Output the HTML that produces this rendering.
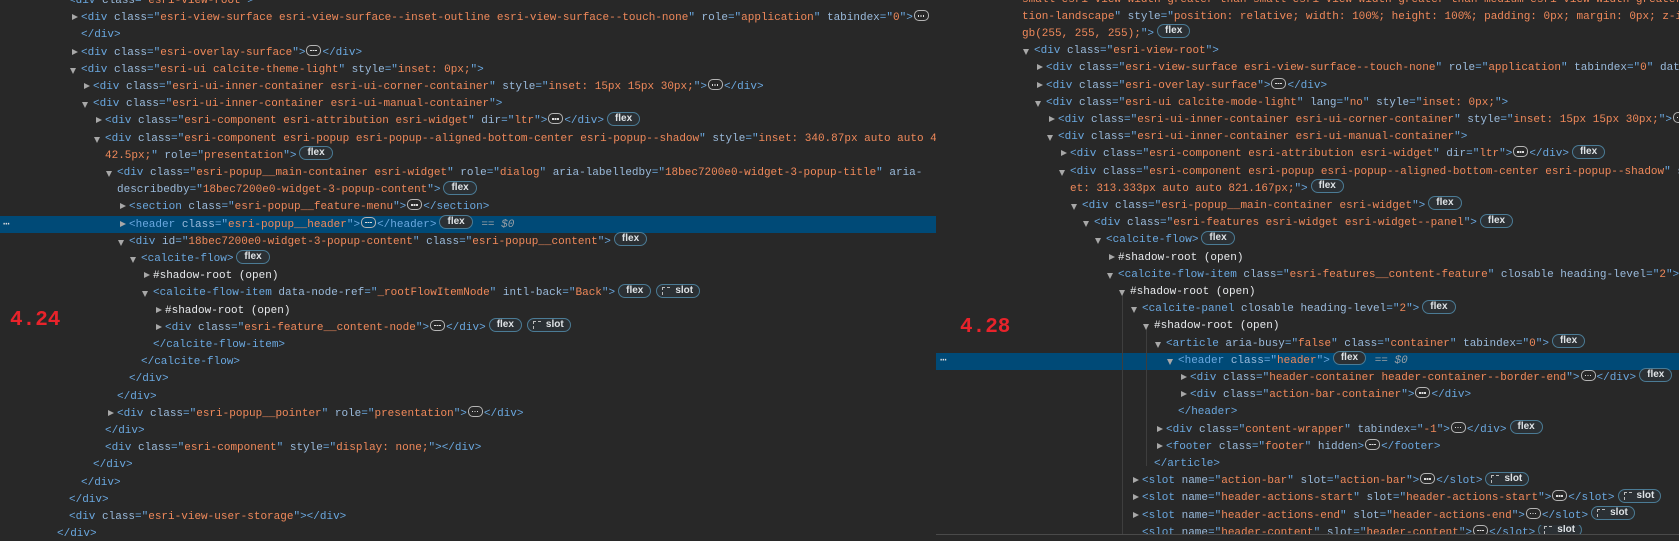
<!DOCTYPE html>
<html><head><meta charset="utf-8">
<style>
html,body{margin:0;padding:0;background:#282828;width:1679px;height:541px;overflow:hidden;position:relative;}
.pane{position:absolute;top:0;height:541px;overflow:hidden;}
#L{left:0;width:936px;}
#R{left:936px;width:743px;}
.l{position:absolute;margin-top:3px;white-space:pre;font-family:"Liberation Mono",monospace;font-size:11px;line-height:17.2px;height:17.2px;color:#e8eaed;}
.t{color:#6aa8e0}
.n{color:#9bbbdc}
.v{color:#f0895a}
.hl{position:absolute;left:0;right:0;height:17px;background:#004a77;margin-top:3px;}
.c,.e{position:absolute;width:0;height:0;}
.c{left:-9px;top:4px;border-left:6px solid #a8a8a8;border-top:3.5px solid transparent;border-bottom:3.5px solid transparent;}
.e{left:-11px;top:6px;border-top:6px solid #a8a8a8;border-left:3.5px solid transparent;border-right:3.5px solid transparent;}
.b{display:inline-block;vertical-align:middle;margin:-3px 2px 0 3px;height:12px;line-height:12px;padding:0 7px;border:1px solid #4b7b95;border-radius:8px;background:#2b3034;font-family:"Liberation Sans",sans-serif;font-size:10px;font-weight:bold;color:#dfe3e6;}
.s{padding:0 6px 0 18px;position:relative}
.s:before{content:"";position:absolute;left:5px;top:2px;width:7px;height:7px;border:1px dashed #bbb;border-right:none;border-bottom:none;}
.d{display:inline-block;vertical-align:middle;margin:-3px 1px 0 1px;width:13px;height:9px;border:1px solid #b5b5b5;border-radius:5px;position:relative;}
.d:after{content:"";position:absolute;left:3px;top:4px;width:1.5px;height:1.5px;background:#ddd;box-shadow:2.5px 0 0 #ddd,5px 0 0 #ddd;}
.eq{color:#9aa0a6;font-style:italic}
.red{position:absolute;font-family:"Liberation Mono",monospace;font-weight:bold;font-size:21px;color:#e8232b;}
.g{position:absolute;width:1px;background:#3e3e3e;}
</style></head><body>
<div class="pane" id="L">
<div class="hl" style="top:212.5px"></div>
<div class="l" style="top:213.6px;left:3px;color:#ddd">⋯</div>
<div class="red" style="left:10px;top:309px">4.24</div>

<div class="l" style="top:-10px;left:69px"><span class="t">&lt;div </span><span class="n">class</span><span class="t">="</span><span class="v">esri-view-root</span><span class="t">"&gt;</span></div>
<div class="l" style="top:7.2px;left:81px"><i class="c"></i><span class="t">&lt;div </span><span class="n">class</span><span class="t">="</span><span class="v">esri-view-surface esri-view-surface--inset-outline esri-view-surface--touch-none</span><span class="t">" </span><span class="n">role</span><span class="t">="</span><span class="v">application</span><span class="t">" </span><span class="n">tabindex</span><span class="t">="</span><span class="v">0</span><span class="t">"&gt;</span><span class="d"></span></div>
<div class="l" style="top:24.4px;left:81px"><span class="t">&lt;/div&gt;</span></div>
<div class="l" style="top:41.6px;left:81px"><i class="c"></i><span class="t">&lt;div </span><span class="n">class</span><span class="t">="</span><span class="v">esri-overlay-surface</span><span class="t">"&gt;</span><span class="d"></span><span class="t">&lt;/div&gt;</span></div>
<div class="l" style="top:58.8px;left:81px"><i class="e"></i><span class="t">&lt;div </span><span class="n">class</span><span class="t">="</span><span class="v">esri-ui calcite-theme-light</span><span class="t">" </span><span class="n">style</span><span class="t">="</span><span class="v">inset: 0px;</span><span class="t">"&gt;</span></div>
<div class="l" style="top:76px;left:93px"><i class="c"></i><span class="t">&lt;div </span><span class="n">class</span><span class="t">="</span><span class="v">esri-ui-inner-container esri-ui-corner-container</span><span class="t">" </span><span class="n">style</span><span class="t">="</span><span class="v">inset: 15px 15px 30px;</span><span class="t">"&gt;</span><span class="d"></span><span class="t">&lt;/div&gt;</span></div>
<div class="l" style="top:93.2px;left:93px"><i class="e"></i><span class="t">&lt;div </span><span class="n">class</span><span class="t">="</span><span class="v">esri-ui-inner-container esri-ui-manual-container</span><span class="t">"&gt;</span></div>
<div class="l" style="top:110.4px;left:105px"><i class="c"></i><span class="t">&lt;div </span><span class="n">class</span><span class="t">="</span><span class="v">esri-component esri-attribution esri-widget</span><span class="t">" </span><span class="n">dir</span><span class="t">="</span><span class="v">ltr</span><span class="t">"&gt;</span><span class="d"></span><span class="t">&lt;/div&gt;</span><span class="b">flex</span></div>
<div class="l" style="top:127.6px;left:105px"><i class="e"></i><span class="t">&lt;div </span><span class="n">class</span><span class="t">="</span><span class="v">esri-component esri-popup esri-popup--aligned-bottom-center esri-popup--shadow</span><span class="t">" </span><span class="n">style</span><span class="t">="</span><span class="v">inset: 340.87px auto auto 4</span></div>
<div class="l" style="top:144.8px;left:105px"><span class="v">42.5px;</span><span class="t">" </span><span class="n">role</span><span class="t">="</span><span class="v">presentation</span><span class="t">"&gt;</span><span class="b">flex</span></div>
<div class="l" style="top:162px;left:117px"><i class="e"></i><span class="t">&lt;div </span><span class="n">class</span><span class="t">="</span><span class="v">esri-popup__main-container esri-widget</span><span class="t">" </span><span class="n">role</span><span class="t">="</span><span class="v">dialog</span><span class="t">" </span><span class="n">aria-labelledby</span><span class="t">="</span><span class="v">18bec7200e0-widget-3-popup-title</span><span class="t">" </span><span class="n">aria-</span></div>
<div class="l" style="top:179.2px;left:117px"><span class="n">describedby</span><span class="t">="</span><span class="v">18bec7200e0-widget-3-popup-content</span><span class="t">"&gt;</span><span class="b">flex</span></div>
<div class="l" style="top:196.4px;left:129px"><i class="c"></i><span class="t">&lt;section </span><span class="n">class</span><span class="t">="</span><span class="v">esri-popup__feature-menu</span><span class="t">"&gt;</span><span class="d"></span><span class="t">&lt;/section&gt;</span></div>
<div class="l" style="top:213.6px;left:129px"><i class="c"></i><span class="t">&lt;header </span><span class="n">class</span><span class="t">="</span><span class="v">esri-popup__header</span><span class="t">"&gt;</span><span class="d"></span><span class="t">&lt;/header&gt;</span><span class="b">flex</span> <span class="eq">== $0</span></div>
<div class="l" style="top:230.8px;left:129px"><i class="e"></i><span class="t">&lt;div </span><span class="n">id</span><span class="t">="</span><span class="v">18bec7200e0-widget-3-popup-content</span><span class="t">" </span><span class="n">class</span><span class="t">="</span><span class="v">esri-popup__content</span><span class="t">"&gt;</span><span class="b">flex</span></div>
<div class="l" style="top:248px;left:141px"><i class="e"></i><span class="t">&lt;calcite-flow&gt;</span><span class="b">flex</span></div>
<div class="l" style="top:265.2px;left:153px"><i class="c"></i>#shadow-root (open)</div>
<div class="l" style="top:282.4px;left:153px"><i class="e"></i><span class="t">&lt;calcite-flow-item </span><span class="n">data-node-ref</span><span class="t">="</span><span class="v">_rootFlowItemNode</span><span class="t">" </span><span class="n">intl-back</span><span class="t">="</span><span class="v">Back</span><span class="t">"&gt;</span><span class="b">flex</span><span class="b s">slot</span></div>
<div class="l" style="top:299.6px;left:165px"><i class="c"></i>#shadow-root (open)</div>
<div class="l" style="top:316.8px;left:165px"><i class="c"></i><span class="t">&lt;div </span><span class="n">class</span><span class="t">="</span><span class="v">esri-feature__content-node</span><span class="t">"&gt;</span><span class="d"></span><span class="t">&lt;/div&gt;</span><span class="b">flex</span><span class="b s">slot</span></div>
<div class="l" style="top:334px;left:153px"><span class="t">&lt;/calcite-flow-item&gt;</span></div>
<div class="l" style="top:351.2px;left:141px"><span class="t">&lt;/calcite-flow&gt;</span></div>
<div class="l" style="top:368.4px;left:129px"><span class="t">&lt;/div&gt;</span></div>
<div class="l" style="top:385.6px;left:117px"><span class="t">&lt;/div&gt;</span></div>
<div class="l" style="top:402.8px;left:117px"><i class="c"></i><span class="t">&lt;div </span><span class="n">class</span><span class="t">="</span><span class="v">esri-popup__pointer</span><span class="t">" </span><span class="n">role</span><span class="t">="</span><span class="v">presentation</span><span class="t">"&gt;</span><span class="d"></span><span class="t">&lt;/div&gt;</span></div>
<div class="l" style="top:420px;left:105px"><span class="t">&lt;/div&gt;</span></div>
<div class="l" style="top:437.2px;left:105px"><span class="t">&lt;div </span><span class="n">class</span><span class="t">="</span><span class="v">esri-component</span><span class="t">" </span><span class="n">style</span><span class="t">="</span><span class="v">display: none;</span><span class="t">"&gt;&lt;/div&gt;</span></div>
<div class="l" style="top:454.4px;left:93px"><span class="t">&lt;/div&gt;</span></div>
<div class="l" style="top:471.6px;left:81px"><span class="t">&lt;/div&gt;</span></div>
<div class="l" style="top:488.8px;left:69px"><span class="t">&lt;/div&gt;</span></div>
<div class="l" style="top:506px;left:69px"><span class="t">&lt;div </span><span class="n">class</span><span class="t">="</span><span class="v">esri-view-user-storage</span><span class="t">"&gt;&lt;/div&gt;</span></div>
<div class="l" style="top:523.2px;left:57px"><span class="t">&lt;/div&gt;</span></div>
</div>

<div class="pane" id="R">
<div class="hl" style="top:349.5px"></div>
<div class="l" style="top:350px;left:4px;color:#ddd">⋯</div>
<div class="red" style="left:24px;top:316px">4.28</div>
<div class="g" style="left:186px;top:293px;height:241px"></div>
<div class="g" style="left:210px;top:328px;height:138px"></div>
<div style="position:absolute;left:0;right:0;top:534px;height:1px;background:#4a4a4a"></div>

<div class="l" style="top:-11.5px;left:86px"><span class="v">small esri-view-width-greater-than-small esri-view-width-greater-than-medium esri-view-width-greater</span></div>
<div class="l" style="top:5.7px;left:86px"><span class="v">tion-landscape</span><span class="t">" </span><span class="n">style</span><span class="t">="</span><span class="v">position: relative; width: 100%; height: 100%; padding: 0px; margin: 0px; z-i</span></div>
<div class="l" style="top:22.9px;left:86px"><span class="v">gb(255, 255, 255);</span><span class="t">"&gt;</span><span class="b">flex</span></div>
<div class="l" style="top:40.1px;left:98px"><i class="e"></i><span class="t">&lt;div </span><span class="n">class</span><span class="t">="</span><span class="v">esri-view-root</span><span class="t">"&gt;</span></div>
<div class="l" style="top:57.3px;left:110px"><i class="c"></i><span class="t">&lt;div </span><span class="n">class</span><span class="t">="</span><span class="v">esri-view-surface esri-view-surface--touch-none</span><span class="t">" </span><span class="n">role</span><span class="t">="</span><span class="v">application</span><span class="t">" </span><span class="n">tabindex</span><span class="t">="</span><span class="v">0</span><span class="t">" </span><span class="n">data-interacting</span></div>
<div class="l" style="top:74.5px;left:110px"><i class="c"></i><span class="t">&lt;div </span><span class="n">class</span><span class="t">="</span><span class="v">esri-overlay-surface</span><span class="t">"&gt;</span><span class="d"></span><span class="t">&lt;/div&gt;</span></div>
<div class="l" style="top:91.7px;left:110px"><i class="e"></i><span class="t">&lt;div </span><span class="n">class</span><span class="t">="</span><span class="v">esri-ui calcite-mode-light</span><span class="t">" </span><span class="n">lang</span><span class="t">="</span><span class="v">no</span><span class="t">" </span><span class="n">style</span><span class="t">="</span><span class="v">inset: 0px;</span><span class="t">"&gt;</span></div>
<div class="l" style="top:108.9px;left:122px"><i class="c"></i><span class="t">&lt;div </span><span class="n">class</span><span class="t">="</span><span class="v">esri-ui-inner-container esri-ui-corner-container</span><span class="t">" </span><span class="n">style</span><span class="t">="</span><span class="v">inset: 15px 15px 30px;</span><span class="t">"&gt;</span><span class="d"></span><span class="t">&lt;/div&gt;</span></div>
<div class="l" style="top:126.1px;left:122px"><i class="e"></i><span class="t">&lt;div </span><span class="n">class</span><span class="t">="</span><span class="v">esri-ui-inner-container esri-ui-manual-container</span><span class="t">"&gt;</span></div>
<div class="l" style="top:143.3px;left:134px"><i class="c"></i><span class="t">&lt;div </span><span class="n">class</span><span class="t">="</span><span class="v">esri-component esri-attribution esri-widget</span><span class="t">" </span><span class="n">dir</span><span class="t">="</span><span class="v">ltr</span><span class="t">"&gt;</span><span class="d"></span><span class="t">&lt;/div&gt;</span><span class="b">flex</span></div>
<div class="l" style="top:160.5px;left:134px"><i class="e"></i><span class="t">&lt;div </span><span class="n">class</span><span class="t">="</span><span class="v">esri-component esri-popup esri-popup--aligned-bottom-center esri-popup--shadow</span><span class="t">" </span><span class="n">style</span><span class="t">="</span><span class="v">ins</span></div>
<div class="l" style="top:177.7px;left:134px"><span class="v">et: 313.333px auto auto 821.167px;</span><span class="t">"&gt;</span><span class="b">flex</span></div>
<div class="l" style="top:194.9px;left:146px"><i class="e"></i><span class="t">&lt;div </span><span class="n">class</span><span class="t">="</span><span class="v">esri-popup__main-container esri-widget</span><span class="t">"&gt;</span><span class="b">flex</span></div>
<div class="l" style="top:212.1px;left:158px"><i class="e"></i><span class="t">&lt;div </span><span class="n">class</span><span class="t">="</span><span class="v">esri-features esri-widget esri-widget--panel</span><span class="t">"&gt;</span><span class="b">flex</span></div>
<div class="l" style="top:229.3px;left:170px"><i class="e"></i><span class="t">&lt;calcite-flow&gt;</span><span class="b">flex</span></div>
<div class="l" style="top:246.5px;left:182px"><i class="c"></i>#shadow-root (open)</div>
<div class="l" style="top:263.7px;left:182px"><i class="e"></i><span class="t">&lt;calcite-flow-item </span><span class="n">class</span><span class="t">="</span><span class="v">esri-features__content-feature</span><span class="t">" </span><span class="n">closable heading-level</span><span class="t">="</span><span class="v">2</span><span class="t">"&gt;</span><span class="b">flex</span></div>
<div class="l" style="top:280.9px;left:194px"><i class="e"></i>#shadow-root (open)</div>
<div class="l" style="top:298.1px;left:206px"><i class="e"></i><span class="t">&lt;calcite-panel </span><span class="n">closable heading-level</span><span class="t">="</span><span class="v">2</span><span class="t">"&gt;</span><span class="b">flex</span></div>
<div class="l" style="top:315.3px;left:218px"><i class="e"></i>#shadow-root (open)</div>
<div class="l" style="top:332.5px;left:230px"><i class="e"></i><span class="t">&lt;article </span><span class="n">aria-busy</span><span class="t">="</span><span class="v">false</span><span class="t">" </span><span class="n">class</span><span class="t">="</span><span class="v">container</span><span class="t">" </span><span class="n">tabindex</span><span class="t">="</span><span class="v">0</span><span class="t">"&gt;</span><span class="b">flex</span></div>
<div class="l" style="top:349.7px;left:242px"><i class="e"></i><span class="t">&lt;header </span><span class="n">class</span><span class="t">="</span><span class="v">header</span><span class="t">"&gt;</span><span class="b">flex</span> <span class="eq">== $0</span></div>
<div class="l" style="top:366.9px;left:254px"><i class="c"></i><span class="t">&lt;div </span><span class="n">class</span><span class="t">="</span><span class="v">header-container header-container--border-end</span><span class="t">"&gt;</span><span class="d"></span><span class="t">&lt;/div&gt;</span><span class="b">flex</span></div>
<div class="l" style="top:384.1px;left:254px"><i class="c"></i><span class="t">&lt;div </span><span class="n">class</span><span class="t">="</span><span class="v">action-bar-container</span><span class="t">"&gt;</span><span class="d"></span><span class="t">&lt;/div&gt;</span></div>
<div class="l" style="top:401.3px;left:242px"><span class="t">&lt;/header&gt;</span></div>
<div class="l" style="top:418.5px;left:230px"><i class="c"></i><span class="t">&lt;div </span><span class="n">class</span><span class="t">="</span><span class="v">content-wrapper</span><span class="t">" </span><span class="n">tabindex</span><span class="t">="</span><span class="v">-1</span><span class="t">"&gt;</span><span class="d"></span><span class="t">&lt;/div&gt;</span><span class="b">flex</span></div>
<div class="l" style="top:435.7px;left:230px"><i class="c"></i><span class="t">&lt;footer </span><span class="n">class</span><span class="t">="</span><span class="v">footer</span><span class="t">" </span><span class="n">hidden</span><span class="t">&gt;</span><span class="d"></span><span class="t">&lt;/footer&gt;</span></div>
<div class="l" style="top:452.9px;left:218px"><span class="t">&lt;/article&gt;</span></div>
<div class="l" style="top:470.1px;left:206px"><i class="c"></i><span class="t">&lt;slot </span><span class="n">name</span><span class="t">="</span><span class="v">action-bar</span><span class="t">" </span><span class="n">slot</span><span class="t">="</span><span class="v">action-bar</span><span class="t">"&gt;</span><span class="d"></span><span class="t">&lt;/slot&gt;</span><span class="b s">slot</span></div>
<div class="l" style="top:487.3px;left:206px"><i class="c"></i><span class="t">&lt;slot </span><span class="n">name</span><span class="t">="</span><span class="v">header-actions-start</span><span class="t">" </span><span class="n">slot</span><span class="t">="</span><span class="v">header-actions-start</span><span class="t">"&gt;</span><span class="d"></span><span class="t">&lt;/slot&gt;</span><span class="b s">slot</span></div>
<div class="l" style="top:504.5px;left:206px"><i class="c"></i><span class="t">&lt;slot </span><span class="n">name</span><span class="t">="</span><span class="v">header-actions-end</span><span class="t">" </span><span class="n">slot</span><span class="t">="</span><span class="v">header-actions-end</span><span class="t">"&gt;</span><span class="d"></span><span class="t">&lt;/slot&gt;</span><span class="b s">slot</span></div>
<div class="l" style="top:521.7px;left:206px;height:9.5px;overflow:hidden"><i class="c"></i><span class="t">&lt;slot </span><span class="n">name</span><span class="t">="</span><span class="v">header-content</span><span class="t">" </span><span class="n">slot</span><span class="t">="</span><span class="v">header-content</span><span class="t">"&gt;</span><span class="d"></span><span class="t">&lt;/slot&gt;</span><span class="b s">slot</span></div>
</div>
</body></html>
